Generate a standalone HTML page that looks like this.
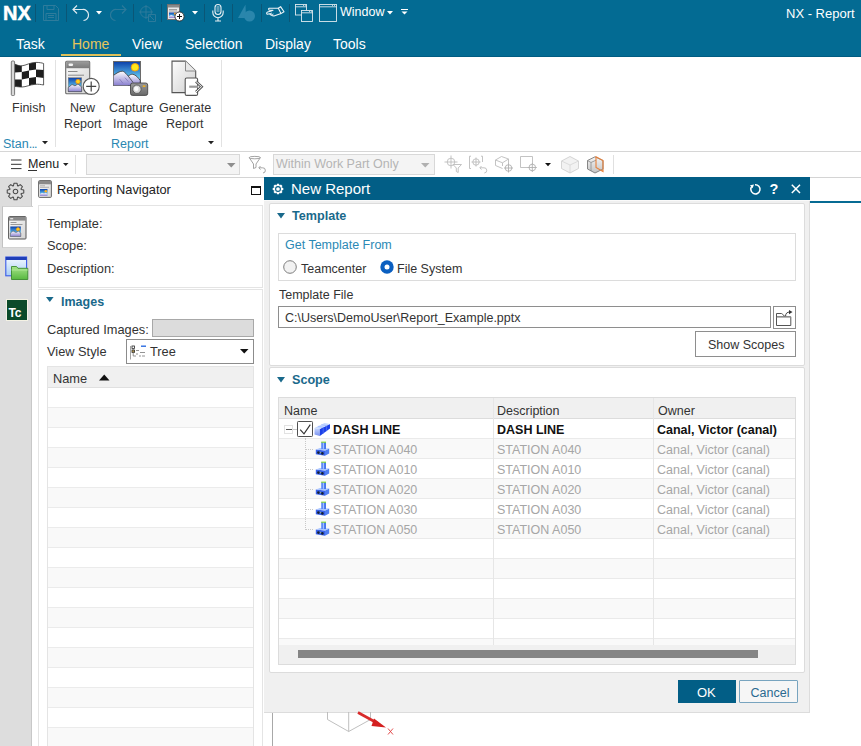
<!DOCTYPE html>
<html><head><meta charset="utf-8">
<style>
*{box-sizing:border-box}
html,body{margin:0;padding:0;width:861px;height:746px;overflow:hidden;background:#fff;font-family:"Liberation Sans",sans-serif;font-size:13px;color:#222}
.a{position:absolute}
.t{position:absolute;white-space:nowrap;line-height:1}
svg{position:absolute;overflow:visible}
.tb{font-size:14px;color:#fff;top:36.5px}
.rb{font-size:12.5px;color:#333}
.nv{font-size:12.8px;color:#333}
.dl{font-size:12.5px;color:#333}
.sec{font-size:12.6px;font-weight:bold;color:#19698b}
.row{position:absolute;left:279px;width:516px;height:20px;border-bottom:1px solid #eaeaea}
.st{font-size:12.5px;color:#a6a6a6}
.nrow{position:absolute;left:48px;width:205px;height:20px;border-bottom:1px solid #ebebeb}
</style></head><body>

<!-- TOP BAR -->
<div class="a" style="left:0;top:0;width:861px;height:57px;background:#036b93;border-bottom:1px solid #005c82"></div>
<div class="t" style="left:3px;top:2.5px;font-size:20px;font-weight:bold;color:#fff;letter-spacing:0px;-webkit-text-stroke:0.5px #fff">NX</div>
<div class="t tb" style="left:16px">Task</div>
<div class="t tb" style="left:72px;color:#e5c65c">Home</div>
<div class="a" style="left:61px;top:54px;width:60px;height:2px;background:#dcbf5a"></div>
<div class="t tb" style="left:132px">View</div>
<div class="t tb" style="left:185px">Selection</div>
<div class="t tb" style="left:265px">Display</div>
<div class="t tb" style="left:333px">Tools</div>
<div class="t" style="left:786px;top:7px;font-size:13px;color:#fff">NX - Report</div>
<div class="t" style="left:340px;top:6px;font-size:12.5px;color:#fff">Window</div>


<!-- QAT -->
<div class="a" style="left:35px;top:4px;width:1px;height:18px;background:#0a5676"></div>
<div class="a" style="left:66px;top:4px;width:1px;height:18px;background:#0a5676"></div>
<div class="a" style="left:133px;top:4px;width:1px;height:18px;background:#0a5676"></div>
<div class="a" style="left:161px;top:4px;width:1px;height:18px;background:#0a5676"></div>
<div class="a" style="left:204px;top:4px;width:1px;height:18px;background:#0a5676"></div>
<div class="a" style="left:232px;top:4px;width:1px;height:18px;background:#0a5676"></div>
<div class="a" style="left:261px;top:4px;width:1px;height:18px;background:#0a5676"></div>
<div class="a" style="left:289px;top:4px;width:1px;height:18px;background:#0a5676"></div>
<!-- save dim -->
<svg style="left:43px;top:5px" width="16" height="16" viewBox="0 0 16 16"><path d="M0.5 0.5h12l3 3v12h-15z M4 0.5v4h7v-4 M3 8.5h10v7h-10z M5 10.5h6 M5 12.5h6" fill="none" stroke="#2f7c9c" stroke-width="1"/></svg>
<!-- undo -->
<svg style="left:72px;top:4px" width="17" height="18" viewBox="0 0 17 18"><path d="M1 6.5h9.5a5.5 5.5 0 0 1 1 11 M5 2.5l-4 4 4 4" fill="none" stroke="#dfeaf0" stroke-width="1.2" transform="translate(0,-1)"/></svg>
<svg style="left:96px;top:11px" width="6" height="4" viewBox="0 0 6 4"><path d="M0 0h6l-3 3.5z" fill="#fff"/></svg>
<!-- redo dim -->
<svg style="left:110px;top:4px" width="17" height="18" viewBox="0 0 17 18"><path d="M16 6.5h-9.5a5.5 5.5 0 0 0 -1 11 M12 2.5l4 4 -4 4" fill="none" stroke="#2c7a9b" stroke-width="1.2" transform="translate(0,-1)"/></svg>
<!-- snap dim -->
<svg style="left:139px;top:5px" width="17" height="17" viewBox="0 0 17 17"><circle cx="7" cy="7" r="5.5" fill="none" stroke="#2c7a9b" stroke-width="1"/><path d="M0 7h14 M7 0v14 M9.5 9.5h7v7h-7z M11 11l4 4" fill="none" stroke="#2c7a9b" stroke-width="1"/></svg>
<!-- report icon -->
<svg style="left:167px;top:4px" width="18" height="18" viewBox="0 0 18 18"><rect x="0.5" y="0.5" width="12" height="15" fill="#e8e8e8" stroke="#707070"/><rect x="1" y="1" width="11" height="2.5" fill="#8a8a8a"/><path d="M2 5.5h8 M2 7h8" stroke="#a0a0a0"/><rect x="2" y="8.5" width="7.5" height="5.5" fill="url(#sky)"/><circle cx="8" cy="9.7" r="1.1" fill="#f0a020"/><path d="M2 12.5 L4 11 L6.5 12 L9.5 11.5 V14 H2Z" fill="url(#mtn)"/><circle cx="12.5" cy="12.5" r="4.6" fill="#fff" stroke="#333" stroke-width="1"/><path d="M10 12.5h5 M12.5 10v5" stroke="#111" stroke-width="1"/></svg>
<svg style="left:192px;top:11px" width="6" height="4" viewBox="0 0 6 4"><path d="M0 0h6l-3 3.5z" fill="#fff"/></svg>
<!-- mic -->
<svg style="left:212px;top:4px" width="12" height="18" viewBox="0 0 12 18"><rect x="3" y="0.5" width="6" height="10" rx="3" fill="none" stroke="#e8f0f4" stroke-width="1.1"/><path d="M4.5 3h3 M4.5 5h3 M4.5 7h3" stroke="#e8f0f4" stroke-width="0.8"/><path d="M0.8 6.5v2a5.2 5.2 0 0 0 10.4 0v-2 M6 13.7v3 M3 17h6" fill="none" stroke="#e8f0f4" stroke-width="1.1"/></svg>
<!-- dim shape -->
<svg style="left:238px;top:4px" width="18" height="18" viewBox="0 0 18 18"><path d="M7.5 0.5L0 14h8z" fill="#2a86ac"/><circle cx="11.5" cy="12" r="5.5" fill="#2a86ac"/></svg>
<!-- hand -->
<svg style="left:266px;top:6px" width="19" height="12" viewBox="0 0 19 12"><path d="M12.3 2.3 L14.6 0.6 L18 5.8 L15 7.6 Z" fill="none" stroke="#eef4f7" stroke-width="1.1" stroke-linejoin="round"/><path d="M12.3 2.3 H3.2 Q2.3 2.5 2.8 3.6 L3.4 4.3 H7 L4.5 5.3 L1.6 6 Q-0.2 7 1.2 8.3 L3.6 7.8 L5 9 L6.3 9.6 L8 10 L15 7.6" fill="none" stroke="#eef4f7" stroke-width="1.1" stroke-linejoin="round"/><path d="M3.6 7.8 L6 7 M5 9 L7.5 8" stroke="#eef4f7" stroke-width="0.8"/></svg>
<!-- windows -->
<svg style="left:295px;top:4px" width="18" height="18" viewBox="0 0 18 18" fill="none" stroke="#dce8ee" stroke-width="0.9"><rect x="0.5" y="0.5" width="11" height="10.5"/><path d="M0.5 2.8h11 M8 1.6h1 M9.8 1.6h1"/><rect x="6.5" y="6.5" width="11" height="11" fill="#036b93"/><path d="M6.5 8.8h11 M14 7.6h1 M15.8 7.6h1"/></svg>
<svg style="left:319px;top:4px" width="18" height="18" viewBox="0 0 18 18" fill="none" stroke="#dce8ee" stroke-width="0.9"><rect x="0.5" y="0.5" width="17" height="17"/><path d="M0.5 2.8h17 M13 1.6h1 M15 1.6h1"/></svg>
<svg style="left:387px;top:11px" width="6" height="4" viewBox="0 0 6 4"><path d="M0 0h6l-3 3.5z" fill="#fff"/></svg>
<svg style="left:401px;top:9px" width="7" height="6" viewBox="0 0 7 6"><path d="M0 0.5h7" stroke="#fff"/><path d="M0.5 2.5h6l-3 3z" fill="#fff"/></svg>

<!-- RIBBON -->
<div class="a" style="left:0;top:151px;width:861px;height:1px;background:#d6d6d6"></div>
<div class="a" style="left:55px;top:60px;width:1px;height:87px;background:#e2e2e2"></div>
<div class="a" style="left:221px;top:60px;width:1px;height:87px;background:#e2e2e2"></div>
<div class="t rb" style="left:12px;top:102px">Finish</div>
<div class="t rb" style="left:70px;top:102px">New</div>
<div class="t rb" style="left:64px;top:118px">Report</div>
<div class="t rb" style="left:109px;top:102px">Capture</div>
<div class="t rb" style="left:113px;top:118px">Image</div>
<div class="t rb" style="left:159px;top:102px">Generate</div>
<div class="t rb" style="left:166px;top:118px">Report</div>
<div class="t" style="left:3px;top:138px;font-size:12.5px;color:#2a87b2">Stan<span style="letter-spacing:-0.8px">...</span></div>
<div class="t" style="left:111px;top:138px;font-size:12.5px;color:#2a87b2">Report</div>


<!-- ribbon icons -->
<svg style="left:10px;top:60px" width="36" height="37" viewBox="0 0 36 37">
 <defs><clipPath id="fc"><path d="M4.6 4.1 C8 5.5 10 6 12 5.8 C16 5.4 20 2.5 26 2.4 C29 2.4 32 2.8 33.6 3.5 L33.6 25 C31 24.5 28 24 25 24.3 C20 24.7 16 27 12 27 C9 27 7 26.5 4.6 26.5 Z"/></clipPath></defs>
 <g clip-path="url(#fc)">
  <rect x="0" y="0" width="36" height="37" fill="#fff"/>
  <path d="M4.6 0 L11.8 0 L11.8 12 L4.6 12.4 Z" fill="#1e1e1e"/>
  <path d="M19 0 L26 0 L26 9.5 L19 10.5 Z" fill="#1e1e1e"/>
  <path d="M11.8 12 L19 10.5 L19 18 L11.8 19.5 Z" fill="#1e1e1e"/>
  <path d="M26 9.5 L34 10 L34 18 L26 17 Z" fill="#1e1e1e"/>
  <path d="M4.6 19.6 L11.8 19.5 L11.8 30 L4.6 30 Z" fill="#1e1e1e"/>
  <path d="M19 18 L26 17 L26 30 L19 30 Z" fill="#1e1e1e"/>
 </g>
 <path d="M4.6 4.1 C8 5.5 10 6 12 5.8 C16 5.4 20 2.5 26 2.4 C29 2.4 32 2.8 33.6 3.5 L33.6 25 C31 24.5 28 24 25 24.3 C20 24.7 16 27 12 27 C9 27 7 26.5 4.6 26.5 Z" fill="none" stroke="#333" stroke-width="0.8"/>
 <rect x="1.3" y="1" width="3.3" height="34.5" rx="1" fill="#d8d8d8" stroke="#6a6a6a" stroke-width="0.9"/>
</svg>

<svg style="left:65px;top:60px" width="36" height="36" viewBox="0 0 36 36">
 <defs>
  <linearGradient id="nrb" x1="0" y1="0" x2="1" y2="1"><stop offset="0" stop-color="#fafafa"/><stop offset="1" stop-color="#d4d4d4"/></linearGradient>
  <linearGradient id="nrt" x1="0" y1="0" x2="0" y2="1"><stop offset="0" stop-color="#9a9a9a"/><stop offset="1" stop-color="#7a7a7a"/></linearGradient>
  <linearGradient id="sky" x1="0" y1="0" x2="0" y2="1"><stop offset="0" stop-color="#0b3fa8"/><stop offset="0.6" stop-color="#58b8e8"/><stop offset="1" stop-color="#b8f4ff"/></linearGradient>
  <linearGradient id="mtn" x1="0" y1="0" x2="0" y2="1"><stop offset="0" stop-color="#ffffff"/><stop offset="1" stop-color="#8a80d0"/></linearGradient>
 </defs>
 <rect x="0.7" y="1.2" width="24" height="32.5" rx="1" fill="url(#nrb)" stroke="#6a6a6a" stroke-width="1.1"/>
 <rect x="1.2" y="1.7" width="23" height="6.5" fill="url(#nrt)"/>
 <rect x="3.5" y="3.6" width="4.6" height="2.4" rx="1.2" fill="#f4f4f4"/>
 <path d="M3 11.5h9.5 M3 15.2h16" stroke="#8a8a8a" stroke-width="1"/>
 <rect x="3.2" y="17.7" width="13.5" height="14" fill="url(#sky)" stroke="#8a7a60" stroke-width="0.4"/>
 <circle cx="13" cy="21.5" r="2.2" fill="#ffd21a" stroke="#f08a10" stroke-width="0.7"/>
 <path d="M3.2 27.5 L7 24.5 L10 25.8 L13 24 L16.7 27 L16.7 31.7 L3.2 31.7Z" fill="url(#mtn)" stroke="#333" stroke-width="0.6"/>
 <circle cx="26.2" cy="26.4" r="8" fill="#fff" stroke="#555" stroke-width="1.1"/>
 <path d="M21.2 26.4h10 M26.2 21.4v10" stroke="#444" stroke-width="1.2"/>
</svg>

<svg style="left:113px;top:60px" width="36" height="36" viewBox="0 0 36 36">
 <defs>
  <linearGradient id="cam" x1="0" y1="0" x2="0" y2="1"><stop offset="0" stop-color="#9a9a9a"/><stop offset="1" stop-color="#6a6a6a"/></linearGradient>
 </defs>
 <rect x="0.5" y="1.5" width="27" height="24" fill="url(#sky)" stroke="#6a6a6a" stroke-width="1"/>
 <circle cx="22" cy="7.3" r="3.8" fill="#ffe81a" stroke="#f59a10" stroke-width="0.9"/>
 <path d="M15 16.6 C16.5 14.8 18.3 14.1 19.8 14.3 C23 14.8 25 17.7 27.2 20.3 L27.2 25.2 L15 25.2 Z" fill="url(#mtn)" stroke="#333" stroke-width="0.8"/>
 <path d="M0.8 15.2 C3.5 13.2 6.5 11.2 9.4 11.2 C12 11.4 16 17 20 22.4 L20 25.2 L0.8 25.2 Z" fill="url(#mtn)"/>
 <path d="M0.8 15.2 C3.5 13.2 6.5 11.2 9.4 11.2 C12 11.4 16 17 20 22.4" fill="none" stroke="#333" stroke-width="0.8"/>
 <path d="M6.5 19 L9.9 23.3 M11.9 17.7 L15.3 21.6" stroke="#7a70b0" stroke-width="0.7"/>
 <rect x="17.5" y="23" width="17.2" height="12.4" rx="2" fill="url(#cam)" stroke="#3a3a3a" stroke-width="0.8"/>
 <circle cx="23.9" cy="29.2" r="4.2" fill="#d8d8d8" stroke="#4a4a4a" stroke-width="0.8"/>
 <circle cx="23.3" cy="28.8" r="2.2" fill="#fafafa"/>
 <rect x="29.8" y="25.4" width="2.6" height="1.6" fill="#f0b020"/>
</svg>

<svg style="left:171px;top:60px" width="34" height="37" viewBox="0 0 34 37">
 <defs><linearGradient id="gd" x1="0" y1="0" x2="1" y2="1"><stop offset="0" stop-color="#fdfdfd"/><stop offset="1" stop-color="#d0d0d0"/></linearGradient></defs>
 <path d="M1 1.1 H14.5 L24.7 11 V32.6 H1 Z" fill="url(#gd)" stroke="#555" stroke-width="1.1"/>
 <path d="M14.5 1.1 V11 H24.7" fill="#e8e8e8" stroke="#8a8a8a" stroke-width="1"/>
 <rect x="14.2" y="18" width="12.4" height="17.4" rx="1.5" fill="#fff" stroke="#555" stroke-width="1.1"/>
 <path d="M18.2 26.7 H27" stroke="#9a9a9a" stroke-width="2.2"/>
 <path d="M25 21.5 L30.6 26.7 L25 32" fill="none" stroke="#555" stroke-width="2.6"/>
 <path d="M25 21.5 L30.6 26.7 L25 32" fill="none" stroke="#fff" stroke-width="1"/>
</svg>
<svg style="left:42px;top:141px" width="6" height="4" viewBox="0 0 6 4"><path d="M0 0h6l-3 3.2z" fill="#222"/></svg>
<svg style="left:208px;top:141px" width="6" height="4" viewBox="0 0 6 4"><path d="M0 0h6l-3 3.2z" fill="#222"/></svg>

<!-- TOOLBAR ROW -->
<div class="a" style="left:0;top:177px;width:861px;height:1px;background:#d4d4d4"></div>
<div class="t" style="left:28px;top:158px;font-size:12.5px;color:#222">Menu</div>
<div class="a" style="left:75px;top:155px;width:1px;height:19px;background:#e0e0e0"></div>
<div class="a" style="left:86px;top:154px;width:154px;height:21px;background:#f4f4f4;border:1px solid #d8d8d8"></div>
<div class="a" style="left:273px;top:154px;width:162px;height:21px;background:#f4f4f4;border:1px solid #d8d8d8"></div>
<div class="t" style="left:276px;top:158px;font-size:12.5px;color:#b4b4b4">Within Work Part Only</div>
<div class="a" style="left:613px;top:155px;width:1px;height:19px;background:#e0e0e0"></div>


<!-- toolbar icons -->
<svg style="left:11px;top:159px" width="11" height="11" viewBox="0 0 11 11"><path d="M0 1h10.5 M0 5.3h10.5 M0 9.6h10.5" stroke="#333" stroke-width="1"/></svg>
<div class="a" style="left:28px;top:170px;width:9px;height:1px;background:#333"></div>
<svg style="left:63px;top:163px" width="6" height="4" viewBox="0 0 6 4"><path d="M0 0h5.5l-2.75 3z" fill="#222"/></svg>
<svg style="left:227px;top:163px" width="9" height="5" viewBox="0 0 9 5"><path d="M0 0h8.5l-4.25 4.5z" fill="#8e8e8e"/></svg>
<svg style="left:248px;top:156px" width="20" height="18" viewBox="0 0 20 18"><ellipse cx="6.8" cy="1.6" rx="5.6" ry="1.2" fill="none" stroke="#9a9a9a" stroke-width="0.9"/><path d="M1.2 1.6 L5.5 8 V12.5 L8 11.5 V8 L12.4 1.6" fill="none" stroke="#9a9a9a" stroke-width="0.9"/><path d="M12.5 10 L10.8 11.8 L12.5 13.6 M11 11.8 H14.5 A2.6 2.6 0 0 1 15 17" fill="none" stroke="#9a9a9a" stroke-width="0.9"/></svg>
<svg style="left:421px;top:163px" width="9" height="5" viewBox="0 0 9 5"><path d="M0 0h8.5l-4.25 4.5z" fill="#b0b0b0"/></svg>
<svg style="left:444px;top:155px" width="18" height="18" viewBox="0 0 18 18" fill="none" stroke="#bcbcbc" stroke-width="0.9"><circle cx="7" cy="7" r="3.8"/><path d="M0.5 7h13 M7 0.5v13"/><path d="M9 9.5h8.5 L14.2 13 V17.5 L12.3 16.5 V13 Z" fill="#fff"/></svg>
<svg style="left:469px;top:155px" width="19" height="18" viewBox="0 0 19 18" fill="none" stroke="#bcbcbc" stroke-width="0.9"><path d="M2 1.2H0.5V13.5H2 M12 1.2h1.5V7"/><circle cx="7" cy="7" r="3.2"/><path d="M2.5 7h9 M7 2.5v9"/><path d="M12.5 11 L10.8 12.8 L12.5 14.6 M11 12.8 H15 A2.6 2.6 0 0 1 15.3 18"/></svg>
<svg style="left:495px;top:156px" width="19" height="17" viewBox="0 0 19 17" fill="none" stroke="#bcbcbc" stroke-width="0.9"><path d="M0.5 4 L6.5 0.5 L13.5 3 V8 M0.5 4 V9.5 L7.5 12.5 M0.5 4 L7.5 6.8 L13.5 3 M7.5 6.8 V10"/><circle cx="13.5" cy="12" r="3.3" stroke="#b0b0b0"/><path d="M9 12h9 M13.5 7.5v9" stroke="#b0b0b0"/></svg>
<svg style="left:520px;top:156px" width="19" height="17" viewBox="0 0 19 17" fill="none" stroke="#bcbcbc" stroke-width="0.9"><path d="M0.5 11.5V0.5H12.5V8 M0.5 11.5H8"/><circle cx="12.3" cy="11.5" r="3.3" stroke="#b0b0b0"/><path d="M7.8 11.5h9 M12.3 7v9" stroke="#b0b0b0"/></svg>
<svg style="left:545px;top:163px" width="6" height="4" viewBox="0 0 6 4"><path d="M0 0h6l-3 3.3z" fill="#111"/></svg>
<svg style="left:561px;top:156px" width="18" height="18" viewBox="0 0 18 18"><path d="M0.5 5 L9 0.5 L17.5 5 V12.5 L9 17 L0.5 12.5 Z" fill="#f2f2f2" stroke="#d0d0d0" stroke-width="0.9"/><path d="M0.5 5 L9 9 L17.5 5 M9 9 V17" fill="none" stroke="#d8d8d8" stroke-width="0.9"/></svg>
<svg style="left:587px;top:156px" width="17" height="18" viewBox="0 0 17 18"><defs><linearGradient id="cg" x1="0" y1="0" x2="0" y2="1"><stop offset="0" stop-color="#f4f4f4"/><stop offset="1" stop-color="#c4c4c4"/></linearGradient></defs><path d="M0.5 4.5 L8 0.8 L16 4.5 V13 L8 17 L0.5 13 Z" fill="url(#cg)" stroke="#7a7a7a" stroke-width="0.9"/><path d="M0.5 4.5 L4 6.5 L4 15 M4 6.5 L9 4.2" fill="none" stroke="#8a8a8a" stroke-width="0.8"/><path d="M9 0.8 L16 4.5 V15.5 L9 11.5 Z" fill="none" stroke="#e8803a" stroke-width="1.1"/></svg>

<!-- LEFT STRIP -->
<div class="a" style="left:0;top:178px;width:32px;height:568px;background:#dddddd;border-right:1px solid #c8c8c8"></div>
<div class="a" style="left:2px;top:206px;width:31px;height:42px;background:#fff;border:1px solid #d2d2d2;border-left-color:#c2c2c2;border-right:none"></div>



<!-- strip icons -->
<svg style="left:6px;top:182px" width="19" height="19" viewBox="-9.5 -9.5 19 19"><path d="M-2.06 -5.64 L-1.49 -8.27 L1.49 -8.27 L2.06 -5.64 A6.0 6.0 0 0 1 2.53 -5.44 L4.79 -6.90 L6.90 -4.79 L5.44 -2.53 A6.0 6.0 0 0 1 5.64 -2.06 L8.27 -1.49 L8.27 1.49 L5.64 2.06 A6.0 6.0 0 0 1 5.44 2.53 L6.90 4.79 L4.79 6.90 L2.53 5.44 A6.0 6.0 0 0 1 2.06 5.64 L1.49 8.27 L-1.49 8.27 L-2.06 5.64 A6.0 6.0 0 0 1 -2.53 5.44 L-4.79 6.90 L-6.90 4.79 L-5.44 2.53 A6.0 6.0 0 0 1 -5.64 2.06 L-8.27 1.49 L-8.27 -1.49 L-5.64 -2.06 A6.0 6.0 0 0 1 -5.44 -2.53 L-6.90 -4.79 L-4.79 -6.90 L-2.53 -5.44 A6.0 6.0 0 0 1 -2.06 -5.64Z" fill="none" stroke="#4a4a4a" stroke-width="1.05" stroke-linejoin="round"/><circle r="2.3" fill="none" stroke="#4a4a4a" stroke-width="1.05"/></svg>
<svg style="left:8px;top:216px" width="19" height="24" viewBox="0 0 19 24">
 <rect x="0.6" y="0.6" width="17.4" height="22.4" rx="0.8" fill="url(#nrb)" stroke="#555" stroke-width="1"/>
 <rect x="1" y="1" width="16.6" height="3.6" fill="#8a8a8a"/>
 <rect x="2.2" y="2" width="3" height="1.4" fill="#ddd"/>
 <path d="M2.5 6.5h6 M2.5 8.5h12" stroke="#9a9a9a" stroke-width="1"/>
 <rect x="2.3" y="10.5" width="10.5" height="10" fill="url(#sky)"/>
 <circle cx="10" cy="13.3" r="1.7" fill="#ffc81a" stroke="#f08a10" stroke-width="0.5"/>
 <path d="M2.3 17 L5 15 L8 16.5 L10.5 15.2 L12.8 17 V20.5 H2.3Z" fill="url(#mtn)" stroke="#444" stroke-width="0.5"/>
</svg>
<svg style="left:5px;top:256px" width="25" height="25" viewBox="0 0 25 25">
 <defs><linearGradient id="wg" x1="0" y1="0" x2="0" y2="1"><stop offset="0" stop-color="#f4faff"/><stop offset="1" stop-color="#a8cdf5"/></linearGradient>
 <linearGradient id="fg" x1="0" y1="0" x2="0" y2="1"><stop offset="0" stop-color="#a6e48a"/><stop offset="1" stop-color="#58b840"/></linearGradient></defs>
 <rect x="0.8" y="1" width="20.8" height="18.8" fill="url(#wg)" stroke="#3a5ae8" stroke-width="1.1"/>
 <rect x="0.8" y="1" width="20.8" height="3" fill="#1f3fb8"/>
 <path d="M6.5 10.5 H11.5 L13 12.3 H22.8 V23.5 H6.5 Z" fill="url(#fg)" stroke="#3c8a30" stroke-width="0.9"/>
 <path d="M6.5 14 H22.8" stroke="#b8ec9e" stroke-width="0.8"/>
</svg>
<div class="a" style="left:6px;top:299px;width:22px;height:22px;background:#0b4a2a;border:1px solid #f4f2e4"></div>
<div class="t" style="left:8.5px;top:306.5px;font-size:12px;font-weight:bold;color:#fff;letter-spacing:-0.2px">Tc</div>
<svg style="left:38px;top:180px" width="14" height="18" viewBox="0 0 14 18">
 <rect x="0.6" y="0.6" width="12.8" height="16.8" rx="1" fill="url(#nrb)" stroke="#666" stroke-width="1"/>
 <rect x="1" y="1" width="12" height="3.3" fill="#8a8a8a"/>
 <path d="M2 5.8h5 M2 7.3h9" stroke="#a0a0a0" stroke-width="0.8"/>
 <rect x="2" y="9" width="7.5" height="7" fill="url(#sky)"/>
 <circle cx="7.8" cy="11.2" r="1.3" fill="#ffb01a"/>
 <path d="M2 14 L4 12.7 L6 13.6 L7.8 12.8 L9.5 14 V16 H2Z" fill="url(#mtn)"/>
</svg>

<!-- NAV PANEL -->
<div class="t" style="left:57px;top:184px;font-size:12.8px;color:#222">Reporting Navigator</div>
<div class="a" style="left:251px;top:186px;width:10px;height:9px;border:1px solid #111;border-top-width:2px"></div>
<div class="a" style="left:38px;top:205px;width:225px;height:83px;border:1px solid #e4e4e4"></div>
<div class="t nv" style="left:47px;top:218px">Template:</div>
<div class="t nv" style="left:47px;top:240px">Scope:</div>
<div class="t nv" style="left:47px;top:263px">Description:</div>
<div class="a" style="left:38px;top:289px;width:225px;height:460px;border:1px solid #e4e4e4"></div>
<div class="t sec" style="left:61px;top:296px;font-size:12.5px">Images</div>
<div class="t nv" style="left:47px;top:324px">Captured Images:</div>
<div class="a" style="left:152px;top:319px;width:102px;height:18px;background:#dcdcdc;border:1px solid #a8a8a8"></div>
<div class="t nv" style="left:47px;top:346px">View Style</div>
<div class="a" style="left:126px;top:339px;width:128px;height:25px;background:#fff;border:1px solid #8c8c8c"></div>
<div class="t nv" style="left:150px;top:346px">Tree</div>
<div class="a" style="left:47px;top:366px;width:207px;height:380px;border:1px solid #e4e4e4;border-bottom:none"></div>
<div class="a" style="left:48px;top:367px;width:205px;height:21px;background:#f0f0f0;border-bottom:1px solid #e0e0e0"></div>
<div class="t nv" style="left:53px;top:372.8px">Name</div>
<div class="nrow" style="top:388px;background:#fff"></div>
<div class="nrow" style="top:408px;background:#f9f9f9"></div>
<div class="nrow" style="top:428px;background:#fff"></div>
<div class="nrow" style="top:448px;background:#f9f9f9"></div>
<div class="nrow" style="top:468px;background:#fff"></div>
<div class="nrow" style="top:488px;background:#f9f9f9"></div>
<div class="nrow" style="top:508px;background:#fff"></div>
<div class="nrow" style="top:528px;background:#f9f9f9"></div>
<div class="nrow" style="top:548px;background:#fff"></div>
<div class="nrow" style="top:568px;background:#f9f9f9"></div>
<div class="nrow" style="top:588px;background:#fff"></div>
<div class="nrow" style="top:608px;background:#f9f9f9"></div>
<div class="nrow" style="top:628px;background:#fff"></div>
<div class="nrow" style="top:648px;background:#f9f9f9"></div>
<div class="nrow" style="top:668px;background:#fff"></div>
<div class="nrow" style="top:688px;background:#f9f9f9"></div>
<div class="nrow" style="top:708px;background:#fff"></div>
<div class="nrow" style="top:728px;background:#f9f9f9"></div>



<!-- nav icons -->
<svg style="left:46px;top:297px" width="8" height="6" viewBox="0 0 8 6"><path d="M0 0h7.6l-3.8 5z" fill="#19698b"/></svg>
<svg style="left:130px;top:345px" width="17" height="15" viewBox="0 0 17 15">
 <path d="M0.5 1V14.5" stroke="#9a9a9a" stroke-width="0.9"/>
 <rect x="2" y="1" width="2.5" height="2.5" fill="none" stroke="#222" stroke-width="0.8"/>
 <rect x="2" y="5" width="2.5" height="2.5" fill="#d4a020" stroke="#222" stroke-width="0.8"/>
 <path d="M3.2 3.5V11 H6" stroke="#777" stroke-width="0.8" fill="none"/>
 <path d="M6 5.5h3 M6 9h2 M9 11h2 M12 11h3 M10 7.5h5" stroke="#888" stroke-width="0.9"/>
 <path d="M11 1.2h5" stroke="#2a6ae0" stroke-width="1.4"/>
</svg>
<svg style="left:240px;top:349px" width="9" height="5" viewBox="0 0 9 5"><path d="M0 0h8.5l-4.25 4.5z" fill="#111"/></svg>
<svg style="left:99px;top:374px" width="11" height="7" viewBox="0 0 11 7"><path d="M0 6.5h10.5L5.25 0.5z" fill="#111"/></svg>

<!-- DIALOG -->
<div class="a" style="left:264px;top:177px;width:546px;height:536px;background:#f0f0f0;border-right:1px solid #dcdcdc;border-bottom:1px solid #dcdcdc"></div>
<div class="a" style="left:264px;top:177px;width:546px;height:23px;background:#025e86"></div>
<div class="a" style="left:264px;top:200px;width:546px;height:1px;background:#fafafa"></div>
<div class="t" style="left:291px;top:180.5px;font-size:15px;color:#fff">New Report</div>
<div class="a" style="left:810px;top:201px;width:51px;height:2px;background:#066b93"></div>
<div class="a" style="left:269px;top:203px;width:536px;height:163px;background:#fff;border:1px solid #dcdcdc;border-radius:2px"></div>
<div class="t sec" style="left:292px;top:210px">Template</div>
<div class="a" style="left:278px;top:233px;width:518px;height:48px;background:#fff;border:1px solid #dcdcdc"></div>
<div class="t" style="left:285px;top:239px;font-size:12.5px;color:#2b89b5">Get Template From</div>
<div class="t dl" style="left:301px;top:262.5px">Teamcenter</div>
<div class="t dl" style="left:397px;top:262.5px">File System</div>
<div class="t dl" style="left:279px;top:289px">Template File</div>
<div class="a" style="left:278px;top:306px;width:493px;height:22px;background:#fff;border:1px solid #8e8e8e"></div>
<div class="t dl" style="left:285px;top:312px">C:\Users\DemoUser\Report_Example.pptx</div>
<div class="a" style="left:773px;top:306px;width:23px;height:23px;background:#fff;border:1px solid #8e8e8e"></div>
<div class="a" style="left:695px;top:331px;width:101px;height:26px;background:#fff;border:1px solid #8e8e8e"></div>
<div class="t dl" style="left:708px;top:339px">Show Scopes</div>

<div class="a" style="left:269px;top:367px;width:536px;height:306px;background:#fff;border:1px solid #dcdcdc;border-radius:2px"></div>
<div class="t sec" style="left:292px;top:374px">Scope</div>
<div class="a" style="left:278px;top:397px;width:518px;height:268px;background:#fff;border:1px solid #dcdcdc"></div>
<div class="a" style="left:279px;top:398px;width:516px;height:21px;background:#f0f0f0;border-bottom:1px solid #dcdcdc"></div>
<div class="t dl" style="left:284px;top:405px">Name</div>
<div class="t dl" style="left:497px;top:405.0px">Description</div>
<div class="t dl" style="left:658px;top:405px">Owner</div>
<div class="row" style="top:419px;background:#fff"></div>
<div class="row" style="top:439px;background:#f9f9f9"></div>
<div class="row" style="top:459px;background:#fff"></div>
<div class="row" style="top:479px;background:#f9f9f9"></div>
<div class="row" style="top:499px;background:#fff"></div>
<div class="row" style="top:519px;background:#f9f9f9"></div>
<div class="row" style="top:539px;background:#fff"></div>
<div class="row" style="top:559px;background:#f9f9f9"></div>
<div class="row" style="top:579px;background:#fff"></div>
<div class="row" style="top:599px;background:#f9f9f9"></div>
<div class="row" style="top:619px;background:#fff"></div>
<div class="row" style="top:639px;background:#f9f9f9"></div>
<div class="t" style="left:333px;top:424.1px;font-size:12.5px;font-weight:bold;color:#111">DASH LINE</div>
<div class="t" style="left:497px;top:424.1px;font-size:12.5px;font-weight:bold;color:#111">DASH LINE</div>
<div class="t" style="left:657px;top:424.1px;font-size:12.5px;font-weight:bold;color:#111">Canal, Victor (canal)</div>
<div class="t st" style="left:333px;top:444.1px">STATION A040</div>
<div class="t st" style="left:497px;top:444.1px">STATION A040</div>
<div class="t st" style="left:657px;top:444.1px">Canal, Victor (canal)</div>
<div class="t st" style="left:333px;top:464.1px">STATION A010</div>
<div class="t st" style="left:497px;top:464.1px">STATION A010</div>
<div class="t st" style="left:657px;top:464.1px">Canal, Victor (canal)</div>
<div class="t st" style="left:333px;top:484.1px">STATION A020</div>
<div class="t st" style="left:497px;top:484.1px">STATION A020</div>
<div class="t st" style="left:657px;top:484.1px">Canal, Victor (canal)</div>
<div class="t st" style="left:333px;top:504.1px">STATION A030</div>
<div class="t st" style="left:497px;top:504.1px">STATION A030</div>
<div class="t st" style="left:657px;top:504.1px">Canal, Victor (canal)</div>
<div class="t st" style="left:333px;top:524.1px">STATION A050</div>
<div class="t st" style="left:497px;top:524.1px">STATION A050</div>
<div class="t st" style="left:657px;top:524.1px">Canal, Victor (canal)</div>

<div class="a" style="left:493px;top:398px;width:1px;height:247px;background:#e6e6e6"></div>
<div class="a" style="left:653px;top:398px;width:1px;height:247px;background:#e6e6e6"></div>
<div class="a" style="left:279px;top:645px;width:516px;height:19px;background:#f0f0f0"></div>
<div class="a" style="left:298px;top:650px;width:460px;height:8px;background:#858585"></div>

<div class="a" style="left:678px;top:680px;width:58px;height:23px;background:#025e86"></div>
<div class="t" style="left:697px;top:686px;font-size:13px;color:#fff">OK</div>
<div class="a" style="left:739px;top:680px;width:59px;height:23px;background:#f6f6f6;border:1px solid #78a4bf;border-radius:1px"></div>
<div class="t" style="left:750.5px;top:686.5px;font-size:12.5px;color:#2a6a90">Cancel</div>


<!-- dialog icons -->
<svg style="left:272px;top:183px" width="12" height="12" viewBox="-6 -6 12 12"><path d="M-1.41 -3.74 L-1.07 -5.29 L1.07 -5.29 L1.41 -3.74 L1.65 -3.64 L2.98 -4.50 L4.50 -2.98 L3.64 -1.65 L3.74 -1.41 L5.29 -1.07 L5.29 1.07 L3.74 1.41 L3.64 1.65 L4.50 2.98 L2.98 4.50 L1.65 3.64 L1.41 3.74 L1.07 5.29 L-1.07 5.29 L-1.41 3.74 L-1.65 3.64 L-2.98 4.50 L-4.50 2.98 L-3.64 1.65 L-3.74 1.41 L-5.29 1.07 L-5.29 -1.07 L-3.74 -1.41 L-3.64 -1.65 L-4.50 -2.98 L-2.98 -4.50 L-1.65 -3.64Z" fill="#fff"/><circle r="2.4" fill="none" stroke="#025e86" stroke-width="1.1"/><circle r="0.9" fill="#fff"/></svg>
<svg style="left:749px;top:183px" width="12" height="12" viewBox="0 0 12 12"><path d="M3.2 3 A4.6 4.6 0 1 0 6 1.7" fill="none" stroke="#fff" stroke-width="1.5"/><path d="M1 2.2 L5 1.6 L3.6 5.2 Z" fill="#fff"/></svg>
<div class="t" style="left:769.5px;top:181.5px;font-size:14.5px;font-weight:bold;color:#fff">?</div>
<svg style="left:791px;top:184px" width="10" height="10" viewBox="0 0 10 10"><path d="M0.8 0.8 L9 9 M9 0.8 L0.8 9" stroke="#fff" stroke-width="1.5"/></svg>
<svg style="left:277px;top:213px" width="8" height="6" viewBox="0 0 8 6"><path d="M0 0h8l-4 5.5z" fill="#19698b"/></svg>
<svg style="left:277px;top:377px" width="8" height="6" viewBox="0 0 8 6"><path d="M0 0h8l-4 5.5z" fill="#19698b"/></svg>
<svg style="left:283px;top:260px" width="14" height="14" viewBox="0 0 14 14"><circle cx="7" cy="7" r="6.3" fill="#f2f2f2" stroke="#7e7e7e" stroke-width="1"/></svg>
<svg style="left:380px;top:260px" width="14" height="14" viewBox="0 0 14 14"><circle cx="7" cy="7" r="6.7" fill="#0b5fc0"/><circle cx="7" cy="7" r="2.5" fill="#fff"/></svg>
<svg style="left:776px;top:310px" width="17" height="16" viewBox="0 0 17 16"><path d="M0.5 15.5 V3.5 H5.5 C7 3.5 7 6 8.5 6 H9.5 M0.5 6.8 H14.8 V15.5 H0.5" fill="none" stroke="#555" stroke-width="1"/><path d="M0.8 7.3 H14.5" stroke="#aaa" stroke-width="0.8"/><path d="M9.6 6 C9.6 3.5 11 2 14 2" fill="none" stroke="#444" stroke-width="1"/><path d="M13 0 L16.5 2 L13 4.3 Z" fill="#333"/></svg>


<!-- table icons -->
<div class="a" style="left:284px;top:425px;width:9px;height:9px;border:1px solid #e2e2e2;background:#fff"></div>
<div class="a" style="left:285.5px;top:429px;width:6px;height:1px;background:#555"></div>
<div class="a" style="left:293px;top:429px;width:4px;height:1px;background:#c8c8c8"></div>
<svg style="left:297px;top:421px" width="16" height="16" viewBox="0 0 16 16"><rect x="0.5" y="0.5" width="15" height="15" rx="0.8" fill="#fff" stroke="#505050" stroke-width="1"/><path d="M3.2 8.6 L7 12.8 L13.3 3.6" fill="none" stroke="#333" stroke-width="1.15"/></svg>
<svg style="left:312px;top:420px" width="20" height="18" viewBox="0 0 20 18">
 <defs><linearGradient id="bf" x1="0" y1="0" x2="0" y2="1"><stop offset="0" stop-color="#c8d8ff"/><stop offset="1" stop-color="#7890f0"/></linearGradient></defs>
 <path d="M2.5 8 L7.8 9 V16 L2.5 14.5 Z" fill="url(#bf)"/>
 <path d="M7.8 9 L18 4 V8.6 L7.8 16 Z" fill="#1c40e8"/>
 <path d="M2.5 8 L12.5 3 L18 4 L7.8 9 Z" fill="#c4d8ff"/>
 <path d="M11.2 7.3 V13.5 M14.6 5.7 V11.1" stroke="#4a6cf8" stroke-width="0.9"/>
 <path d="M11.2 7.3 L5.9 6.3 M14.6 5.7 L9.3 4.7" stroke="#9ab4ff" stroke-width="0.7"/>
</svg>
<div class="a" style="left:305px;top:438px;width:1px;height:92px;border-left:1px dotted #c8c8c8"></div>
<svg style="left:315px;top:441px" width="16" height="16" viewBox="0 0 16 16">
 <path d="M0.8 8.5 L10 9.5 V14.8 L0.8 13.2 Z" fill="#3a62e8"/>
 <path d="M10 9.5 L14.2 7.4 V12.6 L10 14.8 Z" fill="#4f7ef2"/>
 <path d="M0.8 8.5 L5 6.9 L14.2 7.4 L10 9.5 Z" fill="#a8c4ff"/>
 <rect x="6.2" y="1" width="2.4" height="7" fill="#5e8cf8"/>
 <rect x="8.6" y="1" width="2.4" height="7" fill="#4676f0"/>
 <path d="M8.6 1.3 V7.8" stroke="#d0e0ff" stroke-width="0.6"/>
 <path d="M6.2 1.2 H11" stroke="#8ada3a" stroke-width="1.2"/>
 <circle cx="3.4" cy="11.6" r="1.3" fill="#142038"/><circle cx="7.4" cy="12.4" r="1.3" fill="#142038"/>
 <circle cx="5.4" cy="11.2" r="0.5" fill="#c8e040"/>
</svg>
<div class="a" style="left:306px;top:449px;width:7px;height:1px;border-top:1px dotted #c8c8c8"></div>
<svg style="left:315px;top:461px" width="16" height="16" viewBox="0 0 16 16">
 <path d="M0.8 8.5 L10 9.5 V14.8 L0.8 13.2 Z" fill="#3a62e8"/>
 <path d="M10 9.5 L14.2 7.4 V12.6 L10 14.8 Z" fill="#4f7ef2"/>
 <path d="M0.8 8.5 L5 6.9 L14.2 7.4 L10 9.5 Z" fill="#a8c4ff"/>
 <rect x="6.2" y="1" width="2.4" height="7" fill="#5e8cf8"/>
 <rect x="8.6" y="1" width="2.4" height="7" fill="#4676f0"/>
 <path d="M8.6 1.3 V7.8" stroke="#d0e0ff" stroke-width="0.6"/>
 <path d="M6.2 1.2 H11" stroke="#8ada3a" stroke-width="1.2"/>
 <circle cx="3.4" cy="11.6" r="1.3" fill="#142038"/><circle cx="7.4" cy="12.4" r="1.3" fill="#142038"/>
 <circle cx="5.4" cy="11.2" r="0.5" fill="#c8e040"/>
</svg>
<div class="a" style="left:306px;top:469px;width:7px;height:1px;border-top:1px dotted #c8c8c8"></div>
<svg style="left:315px;top:481px" width="16" height="16" viewBox="0 0 16 16">
 <path d="M0.8 8.5 L10 9.5 V14.8 L0.8 13.2 Z" fill="#3a62e8"/>
 <path d="M10 9.5 L14.2 7.4 V12.6 L10 14.8 Z" fill="#4f7ef2"/>
 <path d="M0.8 8.5 L5 6.9 L14.2 7.4 L10 9.5 Z" fill="#a8c4ff"/>
 <rect x="6.2" y="1" width="2.4" height="7" fill="#5e8cf8"/>
 <rect x="8.6" y="1" width="2.4" height="7" fill="#4676f0"/>
 <path d="M8.6 1.3 V7.8" stroke="#d0e0ff" stroke-width="0.6"/>
 <path d="M6.2 1.2 H11" stroke="#8ada3a" stroke-width="1.2"/>
 <circle cx="3.4" cy="11.6" r="1.3" fill="#142038"/><circle cx="7.4" cy="12.4" r="1.3" fill="#142038"/>
 <circle cx="5.4" cy="11.2" r="0.5" fill="#c8e040"/>
</svg>
<div class="a" style="left:306px;top:489px;width:7px;height:1px;border-top:1px dotted #c8c8c8"></div>
<svg style="left:315px;top:501px" width="16" height="16" viewBox="0 0 16 16">
 <path d="M0.8 8.5 L10 9.5 V14.8 L0.8 13.2 Z" fill="#3a62e8"/>
 <path d="M10 9.5 L14.2 7.4 V12.6 L10 14.8 Z" fill="#4f7ef2"/>
 <path d="M0.8 8.5 L5 6.9 L14.2 7.4 L10 9.5 Z" fill="#a8c4ff"/>
 <rect x="6.2" y="1" width="2.4" height="7" fill="#5e8cf8"/>
 <rect x="8.6" y="1" width="2.4" height="7" fill="#4676f0"/>
 <path d="M8.6 1.3 V7.8" stroke="#d0e0ff" stroke-width="0.6"/>
 <path d="M6.2 1.2 H11" stroke="#8ada3a" stroke-width="1.2"/>
 <circle cx="3.4" cy="11.6" r="1.3" fill="#142038"/><circle cx="7.4" cy="12.4" r="1.3" fill="#142038"/>
 <circle cx="5.4" cy="11.2" r="0.5" fill="#c8e040"/>
</svg>
<div class="a" style="left:306px;top:509px;width:7px;height:1px;border-top:1px dotted #c8c8c8"></div>
<svg style="left:315px;top:521px" width="16" height="16" viewBox="0 0 16 16">
 <path d="M0.8 8.5 L10 9.5 V14.8 L0.8 13.2 Z" fill="#3a62e8"/>
 <path d="M10 9.5 L14.2 7.4 V12.6 L10 14.8 Z" fill="#4f7ef2"/>
 <path d="M0.8 8.5 L5 6.9 L14.2 7.4 L10 9.5 Z" fill="#a8c4ff"/>
 <rect x="6.2" y="1" width="2.4" height="7" fill="#5e8cf8"/>
 <rect x="8.6" y="1" width="2.4" height="7" fill="#4676f0"/>
 <path d="M8.6 1.3 V7.8" stroke="#d0e0ff" stroke-width="0.6"/>
 <path d="M6.2 1.2 H11" stroke="#8ada3a" stroke-width="1.2"/>
 <circle cx="3.4" cy="11.6" r="1.3" fill="#142038"/><circle cx="7.4" cy="12.4" r="1.3" fill="#142038"/>
 <circle cx="5.4" cy="11.2" r="0.5" fill="#c8e040"/>
</svg>
<div class="a" style="left:306px;top:529px;width:7px;height:1px;border-top:1px dotted #c8c8c8"></div>

<!-- GRAPHICS -->
<div class="a" style="left:272px;top:713px;width:1px;height:33px;background:#a8a8a8"></div>

<svg style="left:320px;top:712px" width="80" height="30" viewBox="320 712 80 30">
 <path d="M327.5 712 V719.5 L348.7 731.5 L370.5 719.5 V712 M348.7 712 V731.5" fill="none" stroke="#b8b8b8" stroke-width="0.9"/>
 <path d="M358 712.5 L378 723.5" stroke="#d82a2a" stroke-width="2.6"/>
 <path d="M374 718.5 L386 727.6 L371.5 726 Z" fill="#d42020"/>
 <path d="M388 728.5 L393 734.5 M393 728.5 L388 734.5" stroke="#e04040" stroke-width="0.9"/>
</svg>
</body></html>
